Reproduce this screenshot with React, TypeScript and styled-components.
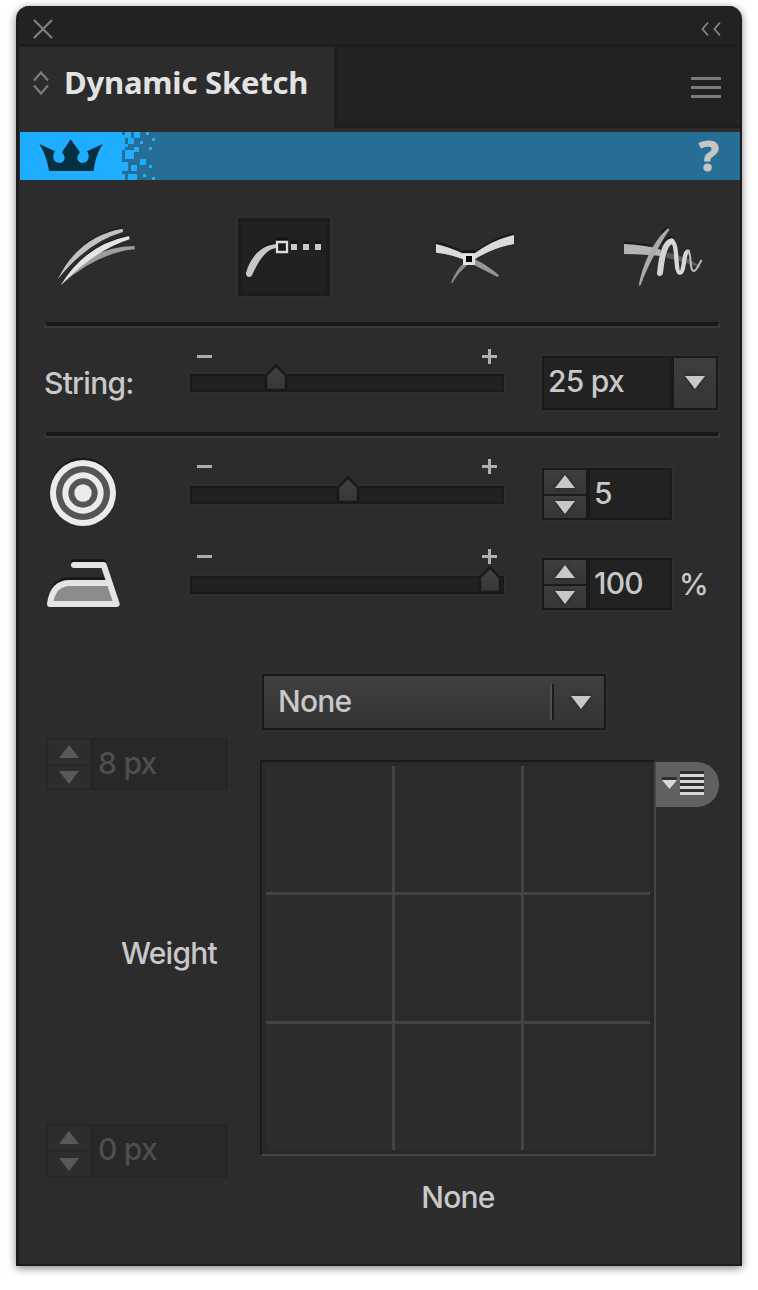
import React from 'react';
import styled, { createGlobalStyle } from 'styled-components';

const c = {
  panel: '#2c2c2c',
  dark: '#222222',
  line: '#1c1c1c',
  edge: '#1a1a1a',
  text: '#c8c8c8',
};

const GlobalStyle = createGlobalStyle`
  * { box-sizing: border-box; }
  html, body { margin: 0; background: #fff; }
  body { overflow: hidden; font-family: Inter, "Liberation Sans", sans-serif; }
  svg { display: block; }
`;

const Page = styled.div`
  width: 758px;
  height: 1290px;
  padding: 6px 16px 24px;
`;

const Panel = styled.main`
  display: flex;
  flex-direction: column;
  width: 726px;
  height: 1260px;
  background: ${c.panel};
  border: solid ${c.line};
  border-width: 0 2px 2px 3px;
  border-radius: 13px 13px 0 0;
  box-shadow: 0 2px 9px rgba(0, 0, 0, 0.5);
  color: ${c.text};
  font-size: 30px;
  font-weight: 450;
  line-height: 36px;
  letter-spacing: -0.75px;
`;

const TitleBar = styled.header`
  display: flex;
  flex: none;
  justify-content: space-between;
  height: 41px;
  padding: 13px 18px 0 14px;
  background: ${c.dark};
  border-bottom: 3px solid #1e1e1e;
  border-radius: 10px 11px 0 0;
`;

const TabBar = styled.div`
  display: flex;
  flex: none;
  height: 81px;
`;

const Tab = styled.div`
  display: flex;
  align-items: center;
  gap: 15px;
  width: 315px;
  padding: 0 0 9px 14px;
`;

const TabTitle = styled.h1`
  margin: -2px 0 0;
  font: 700 31px/40px "Noto Sans", "Open Sans", sans-serif;
  letter-spacing: -0.2px;
  color: #e2e2e2;
  white-space: nowrap;
`;

const TabFiller = styled.div`
  display: flex;
  flex: 1;
  justify-content: flex-end;
  padding: 30px 19px 0 0;
  background: ${c.dark};
  border: solid #1e1e1e;
  border-width: 0 0 3px 3px;
`;

const Banner = styled.div`
  display: flex;
  flex: none;
  justify-content: space-between;
  height: 48px;
  margin: 4px 0 0 1px;
  padding-right: 22px;
  background: #266e95;
`;

const Help = styled.span`
  font: 700 42px/46px "Noto Sans", "Open Sans", sans-serif;
  color: #c6c6c6;
  -webkit-text-stroke: 1px #c6c6c6;
`;

const Tools = styled.div`
  display: grid;
  flex: none;
  grid-template-columns: 188px 191px 188px 92px;
  height: 142px;
  padding: 38px 0 0 31px;
`;

const Tool = styled.div<{ $active?: boolean }>`
  width: 92px;
  height: 78px;
  background: ${(p) => (p.$active ? '#212121' : 'none')};
  box-shadow: ${(p) => (p.$active ? 'inset 0 0 0 4px #1c1c1c, 0 0 0 2px #2f2f2f' : 'none')};
`;

const Separator = styled.div`
  flex: none;
  width: 676px;
  height: 6px;
  margin-left: 25px;
  padding: 0 2px 2px;
  background: linear-gradient(transparent 2px, #3a3a3a 2px);

  &::before {
    content: '';
    display: block;
    height: 4px;
    background: #181818;
  }
`;

const Row = styled.div<{ $height: number }>`
  display: grid;
  flex: none;
  grid-template-columns: 146px 314px auto 1fr;
  align-items: start;
  height: ${(p) => p.$height}px;
  padding: 20px 0 0 25px;
`;

const Label = styled.div`
  padding-top: 17px;
`;

const SliderBox = styled.div`
  position: relative;
`;

const Signs = styled.div<{ $gap: number }>`
  display: flex;
  justify-content: space-between;
  padding: 0 6px;
  margin-bottom: ${(p) => p.$gap}px;
`;

const Track = styled.div`
  height: 18px;
  background: #212121;
  border: 2px solid ${c.edge};
  box-shadow: 0 0 0 2px #2f2f2f;
`;

const Thumb = styled.svg`
  position: absolute;
  bottom: 0;
  transform: translateX(-50%);
`;

const Field = styled.div<{ $width: number; $height?: number; $dim?: boolean }>`
  display: flex;
  flex: none;
  gap: 4px;
  width: ${(p) => p.$width}px;
  height: ${(p) => p.$height ?? 52}px;
  border: 2px solid ${(p) => (p.$dim ? '#262626' : c.edge)};
  background: ${(p) => (p.$dim ? '#262626' : c.edge)};
  box-shadow: 0 0 0 2px ${(p) => (p.$dim ? '#2d2d2d' : '#2f2f2f')};
  color: ${(p) => (p.$dim ? '#4e4e4e' : c.text)};
`;

const FieldSlot = styled.div<{ $top: number }>`
  display: flex;
  align-items: center;
  gap: 7px;
  margin: ${(p) => p.$top}px 0 0 38px;
`;

const Value = styled.div<{ $dim?: boolean; $lift?: number }>`
  display: flex;
  flex: 1;
  align-items: center;
  padding: 0 0 ${(p) => p.$lift ?? 2}px 4px;
  background: ${(p) => (p.$dim ? '#282828' : '#222222')};
  white-space: nowrap;
`;

const Percent = styled.span`
  margin-top: -1px;
`;

const Steps = styled.div`
  display: grid;
  grid-template-rows: 24px 1fr;
  gap: 2px;
  width: 42px;
`;

const ArrowButton = styled.div<{ $dim?: boolean }>`
  display: grid;
  place-items: center;
  width: 42px;
  padding-bottom: 1px;
  background: ${(p) => (p.$dim ? '#2d2d2d' : 'linear-gradient(#3e3e3e, #363636)')};
  color: ${(p) => (p.$dim ? '#595959' : '#c8c8c8')};
  svg { filter: ${(p) => (p.$dim ? 'none' : 'drop-shadow(0 0 2px #222)')}; }

  & + & { padding: 1px 0 0; }
`;

const Select = styled.div`
  display: flex;
  flex: none;
  align-items: center;
  width: 344px;
  height: 56px;
  margin: 56px 0 8px 243px;
  padding: 0 13px 0 14px;
  background: linear-gradient(#3f3f3f, #343434);
  border: 2px solid ${c.edge};
  box-shadow: 0 0 0 2px #2f2f2f;
  svg { filter: drop-shadow(0 0 2px #222); }
`;

const SelectText = styled.span`
  margin-top: -2px;
`;

const SelectRule = styled.div`
  width: 4px;
  height: 36px;
  margin: 0 17px 0 auto;
  border-left: 2px solid #505050;
  border-right: 2px solid ${c.edge};
`;

const Profile = styled.section`
  display: flex;
  flex: none;
  align-items: flex-start;
  padding-left: 27px;
`;

const Limits = styled.div`
  display: flex;
  flex-direction: column;
  justify-content: space-between;
  width: 182px;
  height: 440px;
  margin-right: 32px;
`;

const Axis = styled.div`
  padding: 0 11px 8px 0;
  text-align: right;
`;

const GraphColumn = styled.div`
  width: 396px;
  padding-top: 22px;
`;

const Graph = styled.div`
  display: grid;
  grid-template: 126px 126px 126px / 126px 126px 126px;
  gap: 3px;
  width: 396px;
  height: 396px;
  border: 2px solid;
  border-color: ${c.edge} #444 #444 ${c.edge};
  background: #292929;
  place-content: center;
`;

const Mesh = styled.div`
  grid-area: 1 / 1 / 4 / 4;
  background: #444;
`;

const Cell = styled.div`
  background: ${c.panel};
`;

const Caption = styled.div`
  margin-top: 23px;
  text-align: center;
`;

const GraphMenu = styled.div`
  width: 63px;
  height: 45px;
  margin-top: 24px;
  background: #616161;
  border-radius: 0 22px 22px 0;
`;

const Arrow = ({ up }: { up?: boolean }) => (
  <svg width="20" height="13" viewBox="0 0 20 13">
    <path d={up ? 'M10 0L20 13H0Z' : 'M0 0H20L10 13Z'} fill="currentColor" />
  </svg>
);

const Slider = ({ at, gap = 11 }: { at: number; gap?: number }) => (
  <SliderBox>
    <Signs $gap={gap}>
      <svg width="17" height="17"><path d="M1 8.5H16" stroke="#b0acac" strokeWidth="3" /></svg>
      <svg width="17" height="17"><path d="M1 8.5H16M8.5 1V16" stroke="#b0b0b0" strokeWidth="3" /></svg>
    </Signs>
    <Track />
    <Thumb width="24" height="28" viewBox="0 0 24 28" style={{ left: at }}>
      <defs>
        <linearGradient id="thumb" x2="0" y2="1">
          <stop stopColor="#434343" /><stop offset="1" stopColor="#363636" />
        </linearGradient>
      </defs>
      <path d="M2 26V11.5L12 1.5L22 11.5V26Z" fill="url(#thumb)" stroke={c.edge} strokeWidth="2.5" />
    </Thumb>
  </SliderBox>
);

const Stepper = ({ width, height, dim, children }: {
  width: number; height?: number; dim?: boolean; children: React.ReactNode;
}) => (
  <Field $width={width} $height={height} $dim={dim}>
    <Steps>
      <ArrowButton $dim={dim}><Arrow up /></ArrowButton>
      <ArrowButton $dim={dim}><Arrow /></ArrowButton>
    </Steps>
    <Value $dim={dim} $lift={height ? 4 : 2}>{children}</Value>
  </Field>
);

const pixels: [number, number, number, number][] = [
  [366, 405, 9, 45], [375, 396, 18, 18], [384, 414, 18, 18], [402, 396, 18, 18],
  [375, 432, 9, 9], [438, 396, 9, 9], [456, 414, 9, 9], [420, 423, 9, 9],
  [447, 441, 9, 9], [402, 441, 15, 15], [375, 450, 27, 27], [366, 486, 18, 27],
  [420, 477, 18, 18], [393, 495, 18, 18], [447, 495, 9, 9], [384, 522, 27, 18],
  [366, 522, 9, 18], [429, 522, 9, 9], [456, 531, 9, 9],
];

const BannerArt = () => (
  <svg width="140" height="48" viewBox="60 396 420 144">
    <g fill="#1faeff" shapeRendering="crispEdges">
      <rect x="60" y="396" width="306" height="144" />
      {pixels.map(([x, y, w, h]) => <rect key={`${x}-${y}`} x={x} y={y} width={w} height={h} />)}
    </g>
    <path
      d="M118 432L165 454C155 468 160 489 178 489C195 489 199 470 186 457L212 418L240 457C227 470 231 489 248 489C266 489 271 468 261 454L308 432C292 457 284 486 281 513H147C143 486 134 457 118 432Z"
      fill="#06303f"
    />
  </svg>
);

const StrokesIcon = () => (
  <svg width="92" height="78" viewBox="60 39 276 234">
    <g fill="#1f1f1f" transform="translate(0 -5)">
      <path d="M84 222Q148 96 278 71L279 81Q172 110 84 222Z" />
      <path d="M94 240Q166 122 297 93L299 103Q194 136 94 240Z" />
    </g>
    <path d="M92 240Q172 126 313 123L315 133Q204 142 92 240Z" fill="#9d9d9d" />
    <path d="M83 223Q146 94 278 71L279 81Q174 110 83 223Z" fill="#c2c2c2" />
    <path d="M92 241Q164 120 297 93L299 103Q194 136 92 241Z" fill="#e4e4e4" />
  </svg>
);

const StringIcon = () => (
  <svg width="92" height="78" viewBox="624 39 276 234">
    <path d="M738 103H774M783 112H801M819 112H837M855 112H873" stroke="#131313" strokeWidth="9" />
    <path d="M660 178Q684 122 738 114" fill="none" stroke="#131313" strokeWidth="6" />
    <path d="M648 204C660 160 690 120 740 117V129C712 130 686 164 666 211C662 219 647 217 648 204Z" fill="#c8c8c8" />
    <path d="M741 111H771V141H741Z" fill="#1a1a1a" stroke="#dcdcdc" strokeWidth="7" />
    <path d="M783 126H801M819 126H837M855 126H873" stroke="#c8c8c8" strokeWidth="18" />
  </svg>
);

const NodeIcon = () => (
  <svg width="92" height="78" viewBox="27 39 276 234">
    <path d="M48 113Q90 123 128 143M168 143Q220 101 282 87" fill="none" stroke="#1a1a1a" strokeWidth="9" />
    <path d="M132 174Q108 194 93 233L97 234Q114 204 142 180Z" fill="#8c8c8c" />
    <path d="M164 162Q204 182 237 211L233 216Q198 198 162 180Z" fill="#969696" />
    <path d="M48 117Q92 127 134 148V164Q92 148 48 143Z" fill="#dadada" />
    <path d="M160 148Q216 104 282 90V117Q216 130 162 164Z" fill="#dadada" />
    <rect x="129" y="144" width="36" height="36" fill="#e2e2e2" />
    <rect x="138" y="153" width="18" height="18" fill="#000" />
    <path d="M129 140H165" stroke="#151515" strokeWidth="9" />
  </svg>
);

const ScribbleIcon = () => (
  <svg width="92" height="78" viewBox="591 39 276 234">
    <path d="M612 113Q660 117 692 122M724 82L744 66M730 114Q740 94 764 99" fill="none" stroke="#1c1c1c" strokeWidth="7" />
    <path d="M740 142Q815 158 846 190Q810 176 740 158Z" fill="#5a5a5a" />
    <path d="M612 117Q680 120 722 134V153Q680 148 612 147Z" fill="#b4b4b4" />
    <path d="M744 70C700 108 668 176 656 242L662 240C684 180 716 122 748 74Z" fill="#aaa" />
    <path d="M720 204C724 168 732 112 755 109" fill="none" stroke="#d4d4d4" strokeWidth="18" strokeLinecap="round" />
    <path d="M753 109C776 107 763 203 780 203C794 203 790 140 804 140" fill="none" stroke="#d8d8d8" strokeWidth="13" strokeLinecap="round" />
    <path d="M802 139C817 138 806 198 822 198C830 198 836 178 845 165" fill="none" stroke="#bdbdbd" strokeWidth="6" />
  </svg>
);

const TargetIcon = () => (
  <svg width="80" height="72" viewBox="42 24 240 216" overflow="visible">
    <circle cx="159" cy="121" r="98" fill="#191919" />
    <circle cx="159" cy="129" r="99" fill="#ebebeb" />
    <circle cx="159" cy="129" r="81" fill="#555" />
    <circle cx="159" cy="129" r="62" fill="#ebebeb" />
    <circle cx="159" cy="129" r="44" fill="#555" />
    <circle cx="159" cy="129" r="26" fill="#ebebeb" />
  </svg>
);

const IronIcon = () => (
  <svg width="80" height="72" viewBox="42 294 240 216">
    <g fill="none" strokeWidth="18" strokeLinecap="round" strokeLinejoin="round">
      <path d="M132 336H220M76 412Q92 390 120 390H224" stroke="#171717" />
      <path d="M60 462Q68 399 120 399H237L259 462Z" fill="#8b8b8b" stroke="none" />
      <path d="M132 345H221L260 462H60Q68 399 120 399H237" stroke="#e4e4e4" />
    </g>
  </svg>
);

export default function App() {
  return (
    <Page>
      <GlobalStyle />
      <Panel>
        <TitleBar>
          <svg width="20" height="20"><path d="M1 1L19 19M19 1L1 19" stroke="#808080" strokeWidth="2.2" /></svg>
          <svg width="22" height="20"><path d="M8 3.5L2.5 10L8 16.5M20 3.5L14.5 10L20 16.5" fill="none" stroke="#858585" strokeWidth="1.8" /></svg>
        </TitleBar>
        <TabBar>
          <Tab>
            <svg width="16" height="24"><path d="M1 9.5L8 1.5L15 9.5M1 14.5L8 22.5L15 14.5" fill="none" stroke="#7c7c7c" strokeWidth="2.2" /></svg>
            <TabTitle>Dynamic Sketch</TabTitle>
          </Tab>
          <TabFiller>
            <svg width="30" height="22"><path d="M0 1.5H30M0 10.5H30M0 19.5H30" stroke="#7b7b7b" strokeWidth="3" /></svg>
          </TabFiller>
        </TabBar>
        <Banner>
          <BannerArt />
          <Help>?</Help>
        </Banner>
        <Tools>
          <Tool><StrokesIcon /></Tool>
          <Tool $active><StringIcon /></Tool>
          <Tool><NodeIcon /></Tool>
          <Tool><ScribbleIcon /></Tool>
        </Tools>
        <Separator />
        <Row $height={104}>
          <Label>String:</Label>
          <Slider at={86} gap={9} />
          <FieldSlot $top={8}>
            <Field $width={176} $height={54}>
              <Value $lift={4}>25 px</Value>
              <ArrowButton><Arrow /></ArrowButton>
            </Field>
          </FieldSlot>
        </Row>
        <Separator />
        <Row $height={90}>
          <TargetIcon />
          <Slider at={158} />
          <FieldSlot $top={10}>
            <Stepper width={130}>5</Stepper>
          </FieldSlot>
        </Row>
        <Row $height={90}>
          <IronIcon />
          <Slider at={300} />
          <FieldSlot $top={10}>
            <Stepper width={130}>100</Stepper>
            <Percent>%</Percent>
          </FieldSlot>
        </Row>
        <Select>
          <SelectText>None</SelectText>
          <SelectRule />
          <Arrow />
        </Select>
        <Profile>
          <Limits>
            <Stepper width={182} dim>8 px</Stepper>
            <Axis>Weight</Axis>
            <Stepper width={182} height={54} dim>0 px</Stepper>
          </Limits>
          <GraphColumn>
            <Graph>
              <Mesh />
              {Array.from({ length: 9 }, (_, i) => (
                <Cell key={i} style={{ gridRow: Math.floor(i / 3) + 1, gridColumn: (i % 3) + 1 }} />
              ))}
            </Graph>
            <Caption>None</Caption>
          </GraphColumn>
          <GraphMenu>
            <svg width="63" height="45">
              <path d="M6 16.5H21M24 10.5H48M24 16.5H48M24 22.5H48M24 28.5H48" stroke="#303030" strokeWidth="3" />
              <path d="M6 18H21L13.5 27Z" fill="#d8d8d8" />
              <path d="M24 13.5H48M24 19.5H48M24 25.5H48M24 31.5H48" stroke="#d8d8d8" strokeWidth="3" />
            </svg>
          </GraphMenu>
        </Profile>
      </Panel>
    </Page>
  );
}
